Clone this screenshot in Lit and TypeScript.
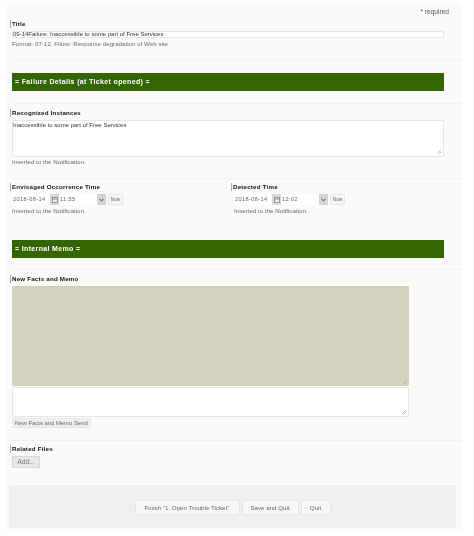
import { LitElement, html, css } from "lit";
import { customElement } from "lit/decorators.js";

@customElement("app-root")
export class AppRoot extends LitElement {
  static styles = css`
    :host { display: block; width: 474px; height: 536px; background: #fff; overflow: hidden; font-family: "Liberation Sans", Arial, sans-serif; color: #333; font-size: 6px; }
    * { box-sizing: border-box; }
    .page { height: 536px; width: 474px; background: #fff; border-right: 1px solid #efefef; padding: 3px 11px 4px 7px; display: flex; flex-direction: column; filter: blur(0.3px); }
    .panel { flex: 1; background: #fafafa; display: flex; flex-direction: column; padding-left: 5px; }
    .req { height: 14px; padding: 5px 13px 0 0; text-align: right; color: #555; font-size: 6.6px; line-height: 8px; }
    .sec { border-bottom: 1px solid #f1f1f1; }
    .s1 { height: 44px; padding-top: 3px; }
    .s2 { height: 43px; padding-top: 12px; }
    .s3 { height: 75px; padding-top: 5px; }
    .s4 { height: 45px; padding-top: 4px; display: grid; grid-template-columns: 221px 1fr; border-bottom: none; }
    .s5 { height: 46px; padding-top: 16px; }
    .s6 { height: 171px; padding-top: 5px; }
    .s7 { height: 44px; padding-top: 4px; border-bottom: none; }
    label.f { display: block; height: 8px; line-height: 8px; font-weight: bold; font-size: 6.2px; letter-spacing: 0.2px; color: #111; border-left: 1px solid #aaa; padding-left: 1px; margin-left: -2px; }
    .input { height: 7px; width: 432px; margin-top: 3px; background: #fff; border: 1px solid #e6e6e6; border-radius: 1px; font-size: 6px; line-height: 5px; color: #333; white-space: nowrap; }
    .hint { color: #6a6a6a; font-size: 6.2px; line-height: 8px; margin-top: 2px; white-space: nowrap; }
    .s3 .hint { margin-top: 1px; }
    .col2 .hint { margin-left: 1px; }
    .banner { height: 18px; width: 432px; background: #336600; color: #fff; font-weight: bold; font-size: 7px; letter-spacing: 0.35px; line-height: 17px; padding-left: 3px; }
    .ta { position: relative; background: #fff; border: 1px solid #e6e6e6; border-radius: 1px; width: 432px; }
    .grip { position: absolute; right: 1px; bottom: 1px; }
    .s3 .ta { height: 37px; margin-top: 3px; font-size: 6px; line-height: 8px; color: #333; }
    .dt { display: flex; align-items: center; height: 11px; margin-top: 3px; font-size: 5.6px; letter-spacing: 0.4px; color: #666; }
    .date { width: 38px; height: 11px; line-height: 11px; background: #fff; padding-left: 1px; white-space: nowrap; }
    .cal { width: 9px; height: 11px; background: #d9d9d9; display: flex; align-items: center; justify-content: center; }
    .time { width: 38px; height: 11px; line-height: 11px; background: #fff; padding-left: 1px; }
    .drop { width: 9px; height: 11px; background: #d4d4d4; display: flex; align-items: center; justify-content: center; }
    .now { width: 15px; height: 11px; margin-left: 2px; border: 1px solid #e8e8e8; background: #f6f6f6; font-size: 4.8px; letter-spacing: 0; line-height: 9px; text-align: center; color: #666; }
    .col2 .date { margin-left: 1px; }
    .memo { height: 100px; width: 397px; margin-top: 3px; background: #d4d2bc; border: none; }
    .memo2 { height: 30px; width: 397px; margin-top: 1px; }
    .send { display: inline-block; height: 10px; margin-top: 1px; padding: 0 2px; background: #efefef; border: 1px solid #e8e8e8; font-size: 5.9px; line-height: 8px; color: #666; white-space: nowrap; }
    .add { width: 28px; height: 12px; margin-top: 3px; background: #e8e8e8; border: 1px solid #d8d8d8; color: #777; font-size: 6.5px; line-height: 10px; text-align: center; }
    .foot { margin: 0 0 0 -3px; width: 447px; height: 43px; background: #efefef; display: flex; justify-content: center; align-items: flex-start; padding: 15px 0 0 0; gap: 2px; }
    .btn { height: 15px; background: #f7f7f7; border: 1px solid #e6e6e6; color: #666; font-size: 6.2px; line-height: 13px; text-align: center; white-space: nowrap; }
    .b1 { width: 105px; }
    .b2 { width: 57px; }
    .b3 { width: 30px; }
  `;

  private grip() {
    return html`<svg class="grip" width="6" height="6" viewBox="0 0 6 6"><path d="M5 1 1 5M5 3 3 5" stroke="#aaa" stroke-width="0.7" fill="none"/></svg>`;
  }

  private dt(d: string, t: string) {
    return html`<div class="dt">
      <span class="date">${d}</span>
      <span class="cal"><svg width="6" height="6" viewBox="0 0 6 6"><rect x="0.5" y="0.5" width="5" height="5" fill="#eee" stroke="#777" stroke-width="0.7"/><path d="M0.5 2h5" stroke="#777" stroke-width="0.7"/></svg></span>
      <span class="time">${t}</span>
      <span class="drop"><svg width="5" height="4" viewBox="0 0 5 4"><path d="M0.6 0.8 2.5 3 4.4 0.8" fill="none" stroke="#444" stroke-width="1"/></svg></span>
      <span class="now">Now</span>
    </div>`;
  }

  render() {
    return html`<div class="page"><div class="panel">
      <div class="req">* required</div>
      <section class="sec s1">
        <label class="f">Title</label>
        <div class="input">09-14Failure: Inaccessible to some part of Free Services</div>
        <div class="hint">Format: 07-12, Filure: Response degradation of Web site</div>
      </section>
      <section class="sec s2"><div class="banner">= Failure Details (at Ticket opened) =</div></section>
      <section class="sec s3">
        <label class="f">Recognized Instances</label>
        <div class="ta">Inaccessible to some part of Free Services${this.grip()}</div>
        <div class="hint">Inserted to the Notification.</div>
      </section>
      <section class="sec s4">
        <div class="col">
          <label class="f">Envisaged Occurrence Time</label>
          ${this.dt("2018-08-14", "11:55")}
          <div class="hint">Inserted to the Notification.</div>
        </div>
        <div class="col col2">
          <label class="f">Detected Time</label>
          ${this.dt("2018-08-14", "12:02")}
          <div class="hint">Inserted to the Notification.</div>
        </div>
      </section>
      <section class="sec s5"><div class="banner">= Internal Memo =</div></section>
      <section class="sec s6">
        <label class="f">New Facts and Memo</label>
        <div class="ta memo">${this.grip()}</div>
        <div class="ta memo2">${this.grip()}</div>
        <div class="send">New Facts and Memo Send</div>
      </section>
      <section class="sec s7">
        <label class="f">Related Files</label>
        <div class="add">Add...</div>
      </section>
      <div class="foot">
        <div class="btn b1">Finish "1. Open Trouble Ticket"</div>
        <div class="btn b2">Save and Quit</div>
        <div class="btn b3">Quit</div>
      </div>
    </div></div>`;
  }
}
